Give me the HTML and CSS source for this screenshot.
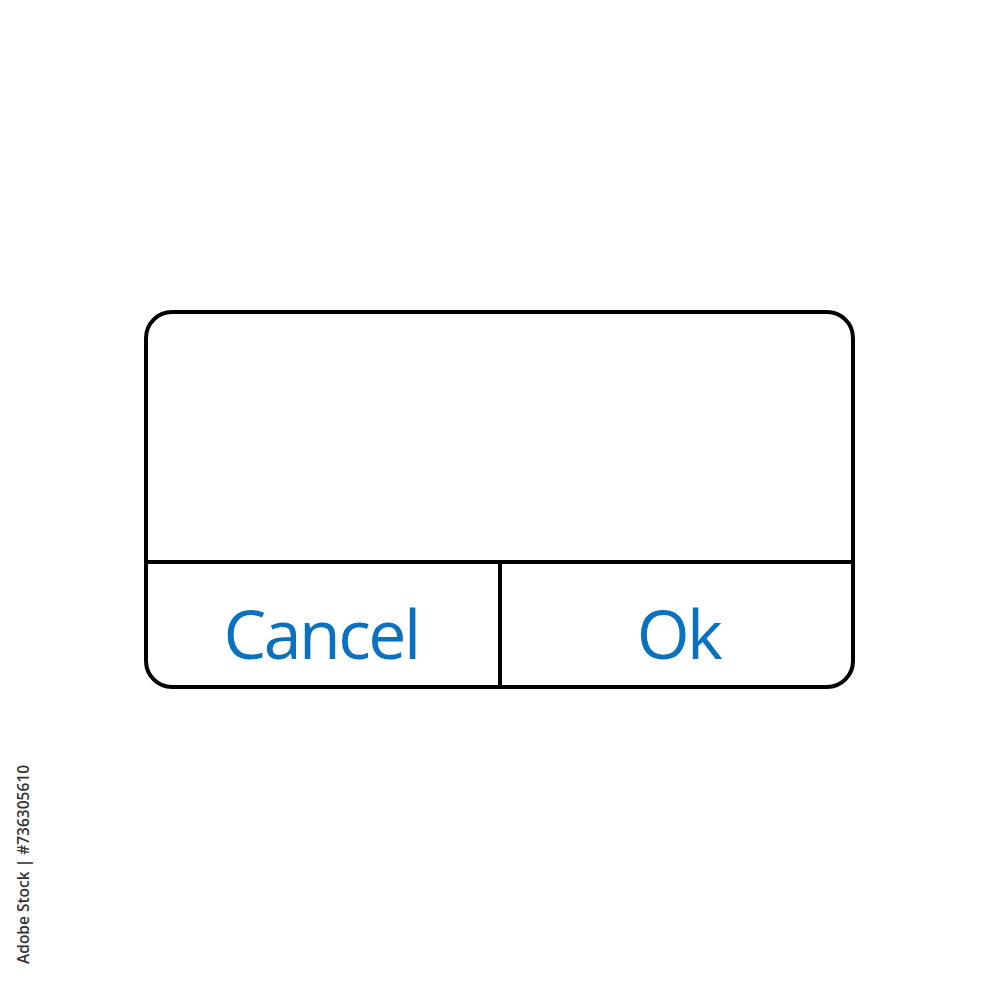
FILE: index.html
```html
<!DOCTYPE html>
<html lang="en">
<head>
    <meta charset="UTF-8">
    <meta name="viewport" content="width=device-width, initial-scale=1.0">
    <title>Confirm Dialog</title>
    <link rel="stylesheet" href="styles.css">
</head>
<body>
    <div class="dialog">
        <div class="dialog-body"></div>
        <div class="dialog-actions">
            <button class="dialog-btn cancel">Cancel</button>
            <button class="dialog-btn ok">Ok</button>
        </div>
    </div>

    <div class="credit">Adobe Stock | #736305610</div>
</body>
</html>
```

FILE: styles.css
```css
body {
    margin: 0;
    width: 1000px;
    height: 1000px;
    background-color: #ffffff;
    font-family: "Open Sans", "Noto Sans", sans-serif;
    overflow: hidden;
}
.dialog {
    box-sizing: border-box;
    width: 711px;
    margin: 310px 0 0 144px;
    border: 4px solid #000;
    border-radius: 28px;
    overflow: hidden;
}
.dialog-body {
    height: 246px;
    border-bottom: 4px solid #000;
}
.dialog-actions {
    display: grid;
    grid-template-columns: 354px 1fr;
    height: 121px;
}
.dialog-btn {
    margin: 0;
    padding: 17px 0 0;
    border: none;
    background: none;
    font-family: "Open Sans", "Noto Sans", sans-serif;
    font-size: 68px;
    line-height: 1;
    letter-spacing: -2.5px;
    color: #0a70c0;
    text-align: center;
    height: 100%;
    box-sizing: border-box;
}
.dialog-btn.cancel {
    padding-right: 4px;
    border-right: 4px solid #000;
}
.dialog-btn.ok {
    padding-left: 4px;
}
.credit {
    writing-mode: vertical-rl;
    transform: rotate(180deg);
    margin: 76px 0 0 13px;
    font-size: 15.5px;
    font-weight: 600;
    color: #333;
    line-height: 20px;
}
```
